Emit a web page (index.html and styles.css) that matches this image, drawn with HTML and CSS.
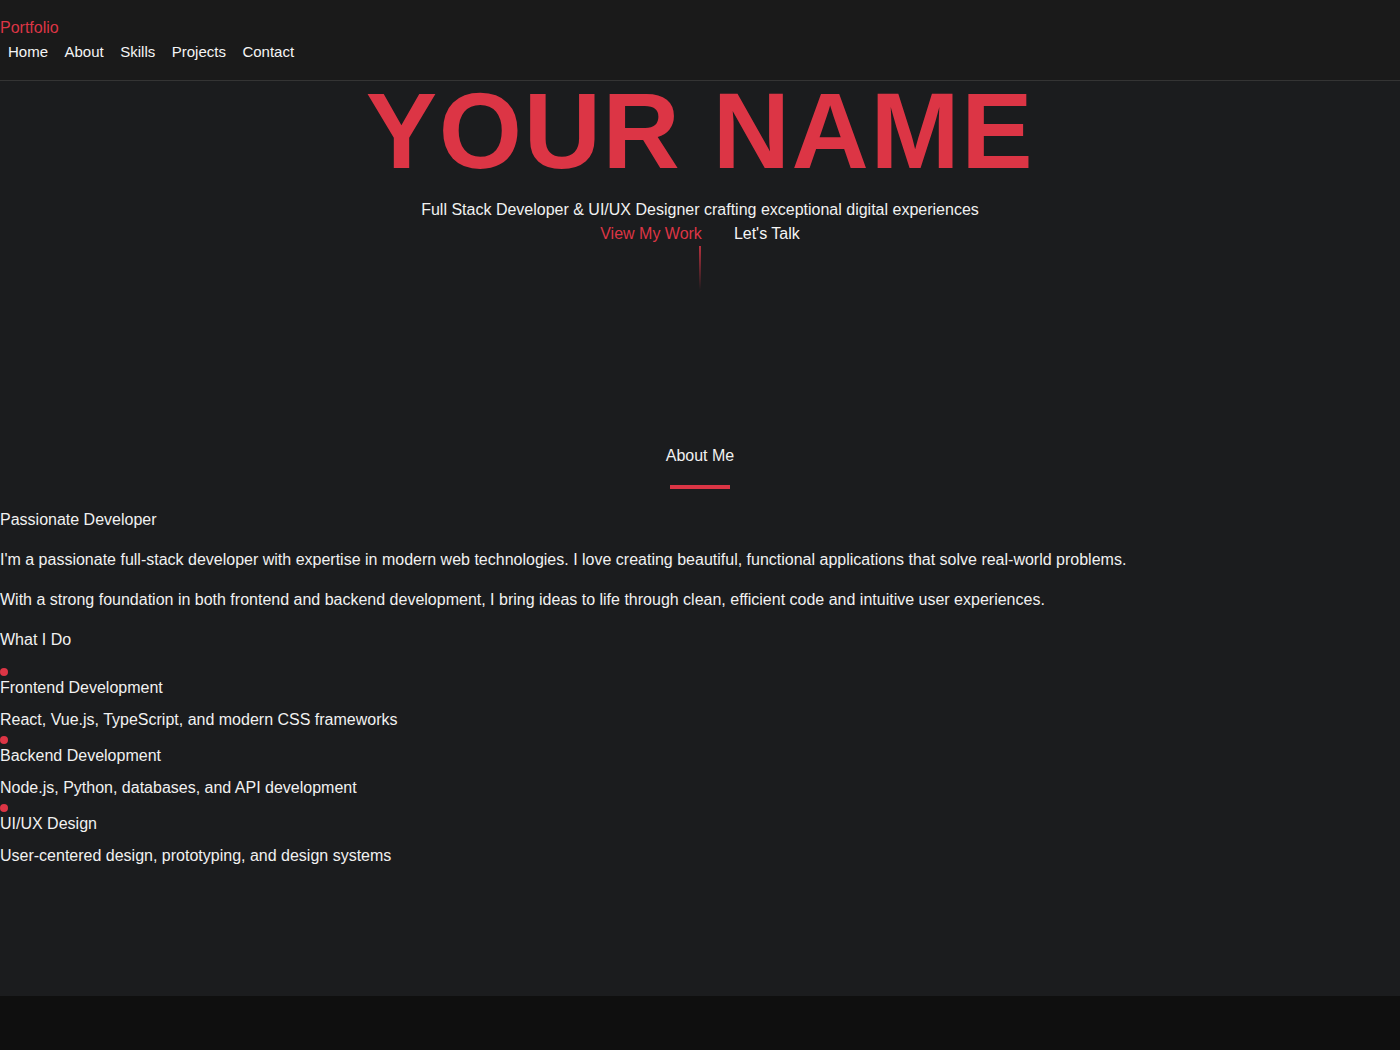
FILE: index.html
```html
<!DOCTYPE html>
<html lang="en">
<head>
<meta charset="utf-8">
<title>Portfolio</title>
<link rel="stylesheet" href="styles.css">
</head>
<body>
<header class="site-header">
  <div class="logo">Portfolio</div>
  <nav class="nav">
    <a href="#home">Home</a>
    <a href="#about">About</a>
    <a href="#skills">Skills</a>
    <a href="#projects">Projects</a>
    <a href="#contact">Contact</a>
  </nav>
</header>
<main class="main">
  <section class="hero" id="home">
    <h1 class="hero-title">YOUR NAME</h1>
    <p class="hero-sub">Full Stack Developer &amp; UI/UX Designer crafting exceptional digital experiences</p>
    <div class="hero-actions">
      <a class="btn-primary" href="#projects">View My Work</a>
      <a class="btn-secondary" href="#contact">Let's Talk</a>
    </div>
    <div class="scroll-line"></div>
  </section>
  <section class="about" id="about">
    <h2 class="section-title">About Me</h2>
    <div class="title-bar"></div>
    <h3 class="about-heading">Passionate Developer</h3>
    <p class="about-text">I'm a passionate full-stack developer with expertise in modern web technologies. I love creating beautiful, functional applications that solve real-world problems.</p>
    <p class="about-text">With a strong foundation in both frontend and backend development, I bring ideas to life through clean, efficient code and intuitive user experiences.</p>
    <h3 class="about-heading">What I Do</h3>
    <div class="services">
      <div class="service">
        <span class="dot"></span>
        <h4 class="service-title">Frontend Development</h4>
        <p class="service-desc">React, Vue.js, TypeScript, and modern CSS frameworks</p>
      </div>
      <div class="service">
        <span class="dot"></span>
        <h4 class="service-title">Backend Development</h4>
        <p class="service-desc">Node.js, Python, databases, and API development</p>
      </div>
      <div class="service">
        <span class="dot"></span>
        <h4 class="service-title">UI/UX Design</h4>
        <p class="service-desc">User-centered design, prototyping, and design systems</p>
      </div>
    </div>
  </section>
</main>
<footer class="footer"></footer>
</body>
</html>
```
FILE: styles.css
```css
* { box-sizing: border-box; }
html, body {
  margin: 0;
  padding: 0;
}
body {
  background: #0f0f0f;
  color: #f1f1f1;
  font-family: "Liberation Sans", Arial, sans-serif;
  font-size: 16px;
}
a { text-decoration: none; }

.site-header {
  background: #1a1a1a;
  border-bottom: 1px solid #343434;
  padding: 19px 0 20px 0;
  display: flex;
  flex-direction: column;
  gap: 6px;
}
.logo {
  color: #dc3545;
  font-size: 16px;
  line-height: 18px;
}
.nav {
  display: flex;
  gap: 0.5px;
}
.nav a {
  color: #f5f5f5;
  font-size: 15px;
  line-height: 17px;
  padding: 0 8px;
}

.main {
  background: #1b1c1e;
}

.hero {
  display: flex;
  flex-direction: column;
  align-items: center;
}
.hero-title {
  margin: 0 0 15px 0;
  color: #dc3545;
  font-size: 107px;
  font-weight: 700;
  line-height: 0.95;
  letter-spacing: 1.6px;
  text-align: center;
  height: 102px;
}
.hero-sub {
  margin: 0;
  line-height: 24px;
  color: #f1f1f1;
}
.hero-actions {
  display: flex;
  gap: 32px;
  line-height: 24px;
}
.btn-primary { color: #dc3545; }
.btn-secondary { color: #f5f5f5; }
.scroll-line {
  width: 2px;
  height: 44px;
  background: linear-gradient(to bottom, rgba(220, 53, 69, 0.8), rgba(220, 53, 69, 0));
}

.about {
  padding: 154px 0 128px 0;
  display: flex;
  flex-direction: column;
}
.section-title {
  margin: 0;
  font-size: 16px;
  font-weight: 400;
  line-height: 24px;
  text-align: center;
}
.title-bar {
  align-self: center;
  width: 60px;
  height: 4px;
  background: #dc3545;
  margin: 17px 0 19px 0;
}
.about-heading {
  margin: 0 0 16px 0;
  font-size: 16px;
  font-weight: 400;
  line-height: 24px;
}
.about-text {
  margin: 0 0 16px 0;
  line-height: 24px;
}
.services {
  display: flex;
  flex-direction: column;
  gap: 4px;
}
.service {
  display: flex;
  flex-direction: column;
}
.dot {
  width: 8px;
  height: 8px;
  border-radius: 50%;
  background: #dc3545;
}
.service-title {
  margin: 0;
  font-size: 16px;
  font-weight: 400;
  line-height: 24px;
}
.service-desc {
  margin: 8px 0 0 0;
  line-height: 24px;
}

.footer {
  height: 60px;
  background: #0f0f0f;
}
```
